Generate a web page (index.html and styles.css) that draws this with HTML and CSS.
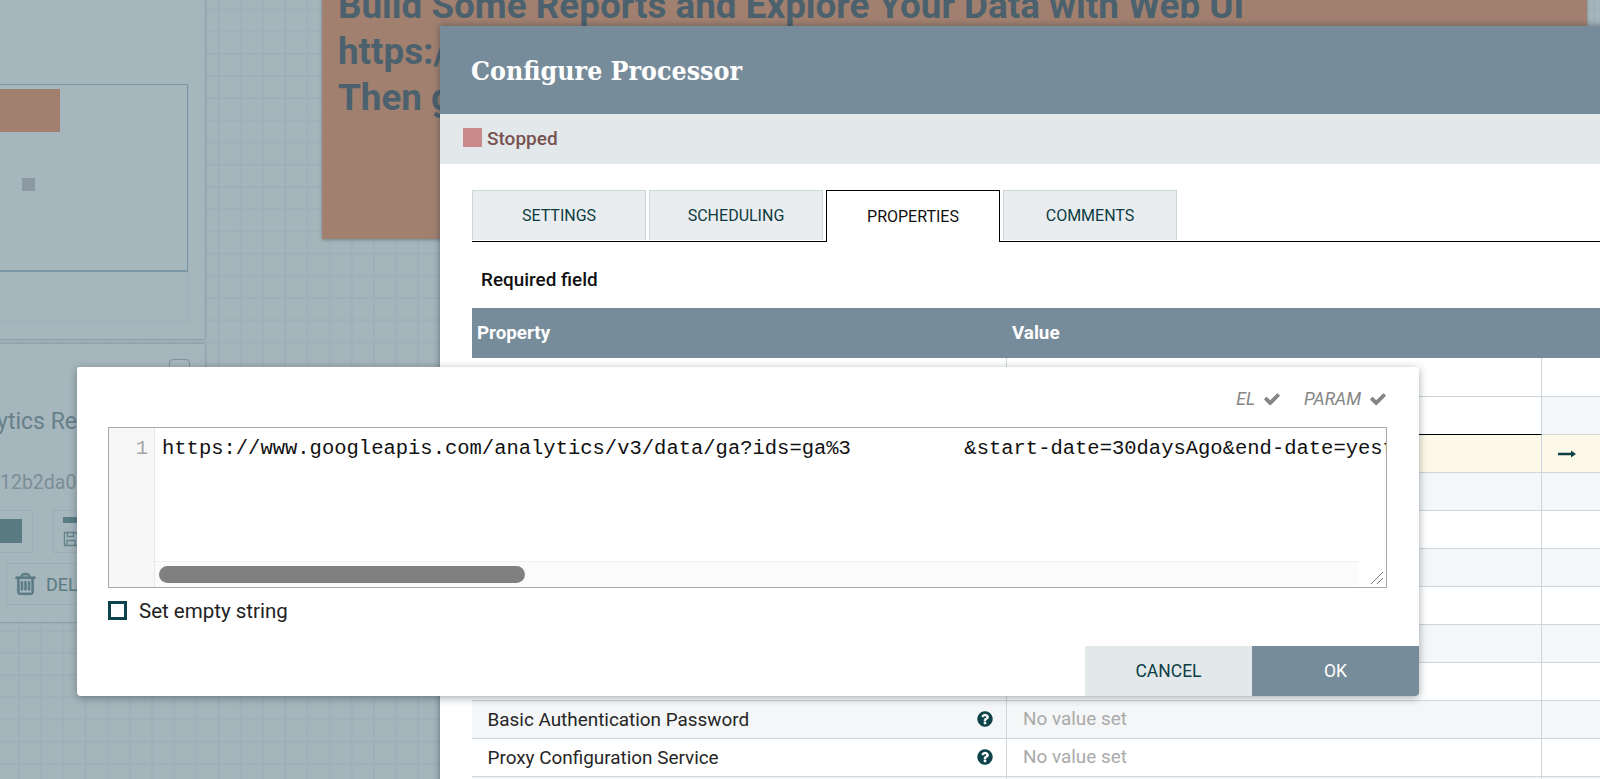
FILE: index.html
```html
<!DOCTYPE html>
<html lang="en">
<head>
<meta charset="utf-8">
<title>Configure Processor</title>
<link rel="stylesheet" href="styles.css">
</head>
<body>
<main class="canvas">
  <section class="sticky">
    <p>Build Some Reports and Explore Your Data with Web UI</p>
    <p>https://localhost</p>
    <p>Then go</p>
  </section>

  <section class="panel panel-top">
    <div class="frame">
      <div class="preview">
        <div class="preview-note"></div>
        <div class="preview-dot"></div>
      </div>
    </div>
  </section>

  <section class="panel panel-bottom">
    <div class="panel-check"></div>
    <div class="panel-name">Analytics Re</div>
    <div class="panel-id">12b2da09</div>
    <div class="panel-actions">
      <div class="panel-btn panel-btn-stop"><span class="stop-block"></span></div>
      <div class="panel-btn panel-btn-save">
        <span class="save-bar"></span>
        <svg class="save-icon" viewBox="0 0 16 16"><path d="M1.5 1.5h11l2 2v11h-13z M4.5 1.5v4h6v-4 M4 14.5v-5h8v5" fill="none" stroke="currentColor" stroke-width="1.4"/></svg>
      </div>
    </div>
    <div class="panel-delete">
      <svg class="trash-icon" viewBox="0 0 1792 1792"><path fill="currentColor" stroke="currentColor" stroke-width="50" d="M704 736v576q0 14-9 23t-23 9h-64q-14 0-23-9t-9-23v-576q0-14 9-23t23-9h64q14 0 23 9t9 23zm256 0v576q0 14-9 23t-23 9h-64q-14 0-23-9t-9-23v-576q0-14 9-23t23-9h64q14 0 23 9t9 23zm256 0v576q0 14-9 23t-23 9h-64q-14 0-23-9t-9-23v-576q0-14 9-23t23-9h64q14 0 23 9t9 23zm128 724v-948h-896v948q0 22 7 40.5t14.5 27 10.5 8.5h832q3 0 10.5-8.5t14.5-27 7-40.5zm-672-1076h448l-48-117q-7-9-17-11h-317q-10 2-17 11zm928 32v64q0 14-9 23t-23 9h-96v948q0 83-47 143.5t-113 60.5h-832q-66 0-113-58.5t-47-141.5v-952h-96q-14 0-23-9t-9-23v-64q0-14 9-23t23-9h309l70-167q15-37 54-63t79-26h320q40 0 79 26t54 63l70 167h309q14 0 23 9t9 23z"/></svg>
      <span>DELETE</span>
    </div>
  </section>

  <section class="dialog">
    <header class="dialog-head">Configure Processor</header>
    <div class="status"><span class="status-box"></span><span class="status-text">Stopped</span></div>
    <div class="dialog-body">
      <nav class="tabs">
        <div class="tab">SETTINGS</div>
        <div class="tab">SCHEDULING</div>
        <div class="tab tab-active">PROPERTIES</div>
        <div class="tab">COMMENTS</div>
      </nav>
      <div class="required">Required field</div>
      <div class="table">
        <div class="row row-head"><div class="cell">Property</div><div class="cell">Value</div><div class="cell"></div></div>
        <div class="row row-first"><div class="cell"></div><div class="cell"></div><div class="cell"></div></div>
        <div class="row row-before-selected"><div class="cell"></div><div class="cell"></div><div class="cell"></div></div>
        <div class="row row-selected"><div class="cell"></div><div class="cell"></div><div class="cell cell-arrow"><svg class="arrow-icon" viewBox="0 0 18 8"><path d="M0 2.8h13V0.6L18 4l-5 3.4V5.2H0z" fill="currentColor"/></svg></div></div>
        <div class="row row-alt"><div class="cell"></div><div class="cell"></div><div class="cell"></div></div>
        <div class="row"><div class="cell"></div><div class="cell"></div><div class="cell"></div></div>
        <div class="row row-alt"><div class="cell"></div><div class="cell"></div><div class="cell"></div></div>
        <div class="row"><div class="cell"></div><div class="cell"></div><div class="cell"></div></div>
        <div class="row row-alt"><div class="cell"></div><div class="cell"></div><div class="cell"></div></div>
        <div class="row"><div class="cell"></div><div class="cell"></div><div class="cell"></div></div>
        <div class="row row-alt">
          <div class="cell cell-name"><span>Basic Authentication Password</span><svg class="help-icon" viewBox="0 0 1792 1792"><path fill="currentColor" d="M1024 1376v-192q0-14-9-23t-23-9h-192q-14 0-23 9t-9 23v192q0 14 9 23t23 9h192q14 0 23-9t9-23zm256-672q0-88-55.5-163t-138.5-116-170-41q-243 0-371 213-15 24 8 42l132 100q7 6 19 6 16 0 25-12 53-68 86-92 34-24 86-24 48 0 85.5 26t37.5 59q0 38-20 61t-68 45q-63 28-115.5 86.5t-52.5 125.5v36q0 14 9 23t23 9h192q14 0 23-9t9-23q0-19 21.5-49.5t54.5-49.5q32-18 49-28.5t46-35 44.5-48 28-60.5 12.5-81zm384 192q0 209-103 385.5t-279.5 279.5-385.5 103-385.5-103-279.5-279.5-103-385.5 103-385.5 279.5-279.5 385.5-103 385.5 103 279.5 279.5 103 385.5z"/></svg></div>
          <div class="cell cell-empty">No value set</div><div class="cell"></div>
        </div>
        <div class="row">
          <div class="cell cell-name"><span>Proxy Configuration Service</span><svg class="help-icon" viewBox="0 0 1792 1792"><path fill="currentColor" d="M1024 1376v-192q0-14-9-23t-23-9h-192q-14 0-23 9t-9 23v192q0 14 9 23t23 9h192q14 0 23-9t9-23zm256-672q0-88-55.5-163t-138.5-116-170-41q-243 0-371 213-15 24 8 42l132 100q7 6 19 6 16 0 25-12 53-68 86-92 34-24 86-24 48 0 85.5 26t37.5 59q0 38-20 61t-68 45q-63 28-115.5 86.5t-52.5 125.5v36q0 14 9 23t23 9h192q14 0 23-9t9-23q0-19 21.5-49.5t54.5-49.5q32-18 49-28.5t46-35 44.5-48 28-60.5 12.5-81zm384 192q0 209-103 385.5t-279.5 279.5-385.5 103-385.5-103-279.5-279.5-103-385.5 103-385.5 279.5-279.5 385.5-103 385.5 103 279.5 279.5 103 385.5z"/></svg></div>
          <div class="cell cell-empty">No value set</div><div class="cell"></div>
        </div>
        <div class="row row-alt"><div class="cell"></div><div class="cell"></div><div class="cell"></div></div>
      </div>
    </div>
  </section>

  <section class="modal">
    <div class="modal-flags">
      <span class="flag">EL<svg class="check-icon" viewBox="0 0 1792 1792"><path fill="currentColor" d="M1671 566q0 40-28 68l-724 724-136 136q-28 28-68 28t-68-28l-136-136-362-362q-28-28-28-68t28-68l136-136q28-28 68-28t68 28l294 295 656-657q28-28 68-28t68 28l136 136q28 28 28 68z"/></svg></span>
      <span class="flag">PARAM<svg class="check-icon" viewBox="0 0 1792 1792"><path fill="currentColor" d="M1671 566q0 40-28 68l-724 724-136 136q-28 28-68 28t-68-28l-136-136-362-362q-28-28-28-68t28-68l136-136q28-28 68-28t68 28l294 295 656-657q28-28 68-28t68 28l136 136q28 28 28 68z"/></svg></span>
    </div>
    <div class="editor">
      <div class="gutter">1</div>
      <div class="editor-main">
        <div class="code">https://www.googleapis.com/analytics/v3/data/ga?ids=ga%3         &amp;start-date=30daysAgo&amp;end-date=yesterday</div>
        <div class="hscroll"><div class="hthumb"></div></div>
      </div>
      <svg class="resize" viewBox="0 0 14 14"><path d="M1 13 13 1M7 13l6-6" stroke="#777" stroke-width="1" fill="none"/></svg>
    </div>
    <label class="empty-row"><span class="checkbox"></span><span>Set empty string</span></label>
    <div class="modal-actions">
      <div class="btn btn-cancel">CANCEL</div>
      <div class="btn btn-ok">OK</div>
    </div>
  </section>
</main>
</body>
</html>
```
FILE: styles.css
```css
* { box-sizing: border-box; }
html, body { margin: 0; height: 100%; overflow: hidden; }
body { font-family: Roboto, "Liberation Sans", sans-serif; color: #262626; }

.canvas {
  position: relative;
  width: 1600px;
  height: 779px;
  overflow: hidden;
  background-color: #a6b5bc;
  background-image:
    linear-gradient(to right, #a0b0b8 1.5px, transparent 1.5px),
    linear-gradient(to bottom, #a0b0b8 1.5px, transparent 1.5px);
  background-size: 22.2px 22.2px;
  background-position: 18px 8.5px;
}

/* Canvas objects */
.sticky {
  position: absolute;
  left: 322px;
  top: -30px;
  width: 1265px;
  height: 269px;
  padding: 13px 16px;
  background: #a28070;
  box-shadow: 0 1px 3px rgba(60, 80, 90, .5);
  color: #4b616d;
  font-size: 36.8px;
  font-weight: 700;
  line-height: 46px;
  overflow: hidden;
}
.sticky p { margin: 0; }

.panel {
  position: absolute;
  left: -2px;
  width: 207px;
  background: #a6b6bd;
  box-shadow: 0 0 2px rgba(70, 95, 108, .7);
}
.panel-top { top: -2px; height: 341px; padding: 86px 17px 0 0; }
.panel-bottom { top: 344px; height: 278px; color: #5a7b82; }

.frame { height: 238px; border: 1px solid #9fb0b8; border-left: 0; margin-right: -1px; }
.preview {
  position: relative;
  height: 188px;
  border: 1.5px solid #7a97a8;
  border-bottom-width: 2px;
  border-left: 0;
  margin-top: -1px;
}
.preview-note { position: absolute; left: 0; top: 4px; width: 62px; height: 43px; background: #a28070; }
.preview-dot { position: absolute; left: 24px; top: 93px; width: 13px; height: 13px; background: #8c99a3; }

.panel-check {
  position: absolute;
  left: 171px;
  top: 15px;
  width: 21px;
  height: 20px;
  border: 1.5px solid #7d939d;
  border-radius: 4px;
}
.panel-name { position: absolute; right: 128px; top: 64px; font-size: 23px; white-space: nowrap; color: #66808a; }
.panel-id { position: absolute; left: 2px; top: 127px; font-size: 19.5px; white-space: nowrap; color: #7c8e98; }
.panel-actions { position: absolute; left: 0; top: 166px; display: flex; gap: 20px; }
.panel-btn { position: relative; height: 43px; border: 1px solid #9badb5; }
.panel-btn-stop { width: 35px; padding: 8px 10px 0 0; border-left: 0; }
.stop-block { display: block; height: 24px; background: #5a7b82; }
.panel-btn-save { width: 60px; color: #66858d; }
.save-bar { position: absolute; left: 9px; top: 6px; width: 20px; height: 6px; background: #5a7b82; }
.save-icon { position: absolute; left: 9px; top: 20px; width: 16px; height: 16px; }
.panel-delete {
  position: absolute;
  left: 8px;
  top: 219px;
  display: flex;
  align-items: center;
  gap: 8px;
  width: 120px;
  height: 42px;
  padding-left: 6px;
  border: 1px solid #9badb5;
  font-size: 18px;
}
.trash-icon { width: 25px; height: 28px; flex: none; }

/* Configure dialog */
.dialog {
  position: absolute;
  left: 440px;
  top: 26px;
  width: 1300px;
  height: 800px;
  display: flex;
  flex-direction: column;
  background: #fff;
  box-shadow: 0 0 7px rgba(40, 55, 65, .55);
}
.dialog-head {
  flex: none;
  height: 87.5px;
  padding: 0 31px;
  background: #778c9a;
  color: #fff;
  font-family: "DejaVu Serif Condensed", "DejaVu Serif", serif;
  font-size: 26.5px;
  font-weight: 700;
  line-height: 89px;
}
.status {
  flex: none;
  display: flex;
  align-items: center;
  gap: 5px;
  height: 50.5px;
  padding-left: 23px;
  background: #e3e8eb;
}
.status-box { width: 19px; height: 19px; background: #c88a8a; margin-top: -2px; }
.status-text { font-size: 19px; font-weight: 500; color: #775351; }
.dialog-body { padding: 26px 0 0 32px; }
.tabs {
  display: flex;
  gap: 3px;
  width: 1268px;
  height: 51.5px;
  border-bottom: 1.5px solid #000;
}
.tab {
  width: 174px;
  height: 50px;
  display: flex;
  align-items: center;
  justify-content: center;
  background: #e9edf0;
  border: 1.5px solid #cbd6d9;
  border-bottom: 0;
  color: #0c3c40;
  font-size: 16px;
  font-weight: 400;
}
.tab-active {
  height: 51.5px;
  background: #fff;
  border: 1.5px solid #000;
  border-bottom: 0;
  color: #111;
}
.required {
  height: 66.5px;
  padding: 26px 0 0 9px;
  font-size: 18.9px;
  font-weight: 500;
  line-height: 24px;
  color: #111;
}
.table { width: 1300px; }
.row {
  display: grid;
  grid-template-columns: 535px 535px 200px;
  height: 38px;
  border-bottom: 1.5px solid #ccd6dc;
}
.row-first { height: 38.5px; }
.row-alt { background: #f4f6f7; }
.row-before-selected { border-bottom: 0; }
.row-before-selected .cell { border-bottom: 1.5px solid #000; }
.row-before-selected .cell:last-child { background: #f4f6f7; border-bottom-color: #ccd6dc; }
.row-selected { background: #fdf9e9; }
.row-head {
  height: 50px;
  border: 0;
  background: #778c9a;
  color: #fff;
  font-size: 18.8px;
  font-weight: 700;
  line-height: 51px;
}
.row-head .cell { padding-left: 5px; border: 0; }
.cell { border-right: 1.5px solid #ccd6dc; min-width: 0; }
.cell-name {
  display: flex;
  align-items: center;
  justify-content: space-between;
  padding: 0 12px 0 15.5px;
  font-size: 18.9px;
  color: #262626;
}
.cell-empty {
  padding-left: 16px;
  font-size: 18.9px;
  line-height: 36px;
  color: #aaa;
}
.cell-arrow { display: flex; align-items: center; padding-left: 16px; color: #0e3f45; }
.arrow-icon { width: 18px; height: 8px; margin-top: 1px; }
.help-icon { width: 18px; height: 18px; color: #0e434a; }

/* Value editor modal */
.modal {
  position: absolute;
  left: 77px;
  top: 367px;
  width: 1342px;
  height: 329px;
  display: flex;
  flex-direction: column;
  padding: 0 0 0 31px;
  background: #fff;
  border-radius: 2px 2px 4px 4px;
  box-shadow: 0 2px 8px rgba(30, 40, 50, .4);
  overflow: hidden;
}
.modal-flags {
  flex: none;
  display: flex;
  justify-content: flex-end;
  align-items: center;
  gap: 23px;
  height: 60px;
  padding: 4px 32px 0 0;
}
.flag {
  display: flex;
  align-items: center;
  gap: 8px;
  font-size: 17.5px;
  font-style: italic;
  color: #858585;
}
.check-icon { width: 18px; height: 18px; color: #858585; }
.editor {
  position: relative;
  flex: none;
  display: flex;
  width: 1279px;
  height: 161px;
  border: 1.5px solid #a8a8a8;
}
.gutter {
  flex: none;
  width: 46px;
  padding: 8px 6px 0 0;
  background: #f7f7f7;
  border-right: 1.5px solid #e8e8e8;
  color: #a6a6a6;
  font-family: "Liberation Mono", monospace;
  font-size: 20.5px;
  line-height: 26px;
  text-align: right;
}
.editor-main { flex: 1; min-width: 0; display: flex; flex-direction: column; }
.code {
  flex: 1;
  overflow: hidden;
  padding: 8px 0 0 7px;
  color: #111;
  font-family: "Liberation Mono", monospace;
  font-size: 20.5px;
  line-height: 26px;
  white-space: pre;
  word-spacing: .3px;
}
.hscroll {
  flex: none;
  width: 1203px;
  height: 26px;
  padding: 4px 0 0 3.5px;
  background: #fbfbfb;
  border-top: 1.5px solid #eee;
}
.hthumb { width: 366px; height: 17px; border-radius: 9px; background: #808080; }
.resize { position: absolute; right: 2px; bottom: 2px; width: 14px; height: 14px; }
.empty-row {
  flex: none;
  display: flex;
  align-items: center;
  gap: 12px;
  height: 19px;
  margin-top: 13px;
  font-size: 20.5px;
  color: #222;
}
.checkbox { width: 19px; height: 19px; border: 3px solid #0e434a; background: #fff; }
.modal-actions { margin-top: auto; display: flex; justify-content: flex-end; }
.btn {
  width: 167px;
  height: 50px;
  display: flex;
  align-items: center;
  justify-content: center;
  font-size: 17.5px;
  font-weight: 400;
}
.btn-cancel { background: #e3e8eb; color: #0e3f45; }
.btn-ok { background: #778c9a; color: #fff; }
```
